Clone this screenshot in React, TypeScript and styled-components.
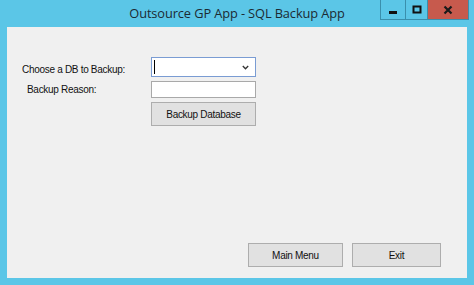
import React from "react";
import styled, { createGlobalStyle } from "styled-components";

const Global = createGlobalStyle`
  html, body { margin: 0; padding: 0; background: #5bc6e7; }
  body { width: 474px; height: 285px; overflow: hidden; }
  * { box-sizing: border-box; }
`;

const Window = styled.div`
  width: 474px;
  height: 285px;
  background: #5bc6e7;
  display: flex;
  flex-direction: column;
  font-family: "Liberation Sans", Arial, sans-serif;
`;

const TitleBar = styled.div`
  height: 27px;
  display: grid;
  grid-template-columns: 1fr auto 1fr;
  align-items: start;
`;

const Title = styled.div`
  grid-column: 2;
  font-family: "Open Sans", "Noto Sans", sans-serif;
  font-size: 12.8px;
  color: #1b2b33;
  line-height: 27px;
  letter-spacing: -0.1px;
`;

const Caption = styled.div`
  grid-column: 3;
  justify-self: end;
  display: flex;
  margin-right: 5px;
  border: 1px solid #3a8fac;
  border-top: none;
`;

const CapBtn = styled.div<{ $w: number; $close?: boolean }>`
  width: ${(p) => p.$w}px;
  height: 19px;
  display: flex;
  align-items: center;
  justify-content: center;
  background: ${(p) => (p.$close ? "#c75a4d" : "#5bc6e7")};
  & + & { border-left: 1px solid #3a8fac; }
`;

const Client = styled.div`
  flex: 1;
  margin: 0 7px 7px 7px;
  background: #f0f0f0;
  display: flex;
  flex-direction: column;
  padding: 30px 0 11px 0;
  font-size: 10px;
  color: #111;
`;

const Form = styled.div`
  display: grid;
  grid-template-columns: 144px 105px;
  row-gap: 4px;
  align-items: center;
`;

const Label = styled.div<{ $indent: number; $dy: number }>`
  padding-left: ${(p) => p.$indent}px;
  padding-top: ${(p) => p.$dy}px;
  font-size: 10px;
  letter-spacing: -0.3px;
`;

const Combo = styled.div`
  height: 20px;
  background: #fff;
  border: 1px solid #7a9cd3;
  display: flex;
  align-items: center;
  justify-content: space-between;
  padding: 0 6px 0 2px;
`;

const Caret = styled.div`
  width: 1px;
  height: 14px;
  background: #000;
`;

const TextBox = styled.div`
  height: 17px;
  background: #fff;
  border: 1px solid #a9a9a9;
`;

const Button = styled.div<{ $w: number }>`
  width: ${(p) => p.$w}px;
  height: 24px;
  background: #e1e1e1;
  border: 1px solid #adadad;
  display: flex;
  align-items: center;
  justify-content: center;
  font-size: 10px;
  letter-spacing: -0.3px;
  color: #111;
`;

const Spacer = styled.div`
  flex: 1;
`;

const Footer = styled.div`
  display: flex;
  justify-content: flex-end;
  gap: 9px;
  padding-right: 26px;
`;

export default function App() {
  return (
    <Window>
      <Global />
      <TitleBar>
        <Title>Outsource GP App - SQL Backup App</Title>
        <Caption>
          <CapBtn $w={24}>
            <svg width="10" height="10" viewBox="0 0 10 10">
              <rect x="1" y="6" width="8" height="3" fill="#111" />
            </svg>
          </CapBtn>
          <CapBtn $w={22}>
            <svg width="10" height="10" viewBox="0 0 10 10">
              <rect x="1.5" y="1.5" width="7" height="6" fill="none" stroke="#111" strokeWidth="2" />
            </svg>
          </CapBtn>
          <CapBtn $w={41} $close>
            <svg width="10" height="10" viewBox="0 0 10 10">
              <path d="M1.5 1.5 L8.5 8.5 M8.5 1.5 L1.5 8.5" stroke="#1a1a1a" strokeWidth="2.2" />
            </svg>
          </CapBtn>
        </Caption>
      </TitleBar>
      <Client>
        <Form>
          <Label $indent={15} $dy={4}>Choose a DB to Backup:</Label>
          <Combo>
            <Caret />
            <svg width="7" height="5" viewBox="0 0 7 5">
              <path d="M0.8 1 L3.5 3.8 L6.2 1" fill="none" stroke="#333" strokeWidth="1.3" />
            </svg>
          </Combo>
          <Label $indent={20} $dy={0}>Backup Reason:</Label>
          <TextBox />
          <div />
          <Button $w={105}>Backup Database</Button>
        </Form>
        <Spacer />
        <Footer>
          <Button $w={95}>Main Menu</Button>
          <Button $w={89}>Exit</Button>
        </Footer>
      </Client>
    </Window>
  );
}
